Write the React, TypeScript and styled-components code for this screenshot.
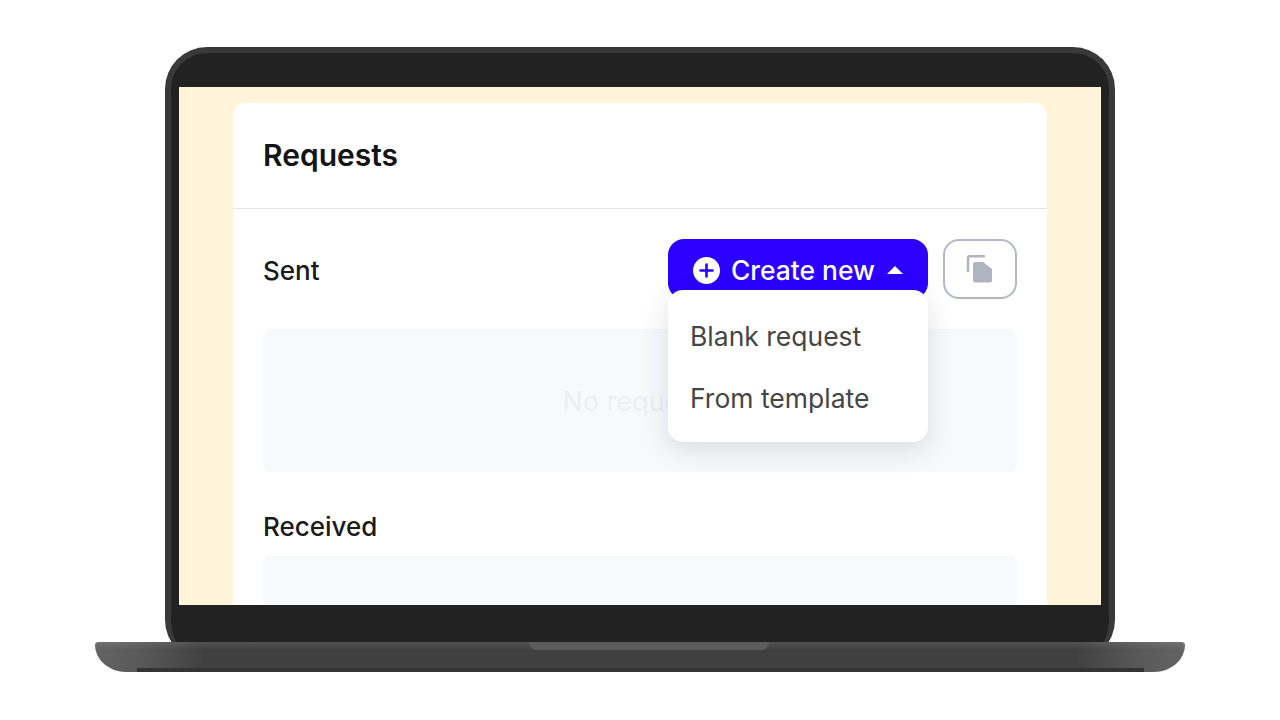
import React from "react";
import styled, { createGlobalStyle } from "styled-components";

const Global = createGlobalStyle`
  html, body { margin: 0; padding: 0; background: #fff; }
  body { font-family: Inter, "Liberation Sans", sans-serif; }
`;

const Stage = styled.div`
  width: 1280px;
  height: 720px;
  display: flex;
  flex-direction: column;
  align-items: center;
  padding-top: 47px;
  box-sizing: border-box;
  overflow: hidden;
`;

const Lid = styled.div`
  width: 950px;
  height: 615px;
  box-sizing: border-box;
  padding: 34px 8px 0;
  background: #222222;
  border: 6px solid #393939;
  border-bottom: 0;
  border-radius: 42px;
  display: flex;
`;

const Screen = styled.div`
  width: 922px;
  height: 518px;
  background: #fff3d9;
  display: flex;
  justify-content: center;
  overflow: hidden;
`;

const Card = styled.div`
  width: 814px;
  margin-top: 16px;
  background: #fff;
  border-radius: 13px 13px 0 0;
  align-self: flex-start;
  height: 560px;
`;

const CardHeader = styled.header`
  height: 106px;
  box-sizing: border-box;
  padding: 0 30px 2px;
  display: flex;
  align-items: center;
  border-bottom: 1px solid #e4e6ea;
`;

const Title = styled.h1`
  margin: 0;
  font-size: 30px;
  font-weight: 600;
  color: #141414;
`;

const Body = styled.div`
  padding: 30px 30px 0;
`;

const SectionRow = styled.div`
  display: flex;
  align-items: center;
  justify-content: space-between;
  height: 60px;
  margin-bottom: 30px;
`;

const SectionLabel = styled.span`
  font-size: 26px;
  font-weight: 500;
  color: #1a1a1a;
  padding-top: 2px;
`;

const Actions = styled.div`
  position: relative;
  display: flex;
  gap: 15px;
`;

const CreateButton = styled.button`
  width: 260px;
  height: 60px;
  border: 0;
  border-radius: 16px;
  background: #2b00ff;
  color: #fff;
  font: 500 26.4px Inter, sans-serif;
  display: flex;
  align-items: flex-start;
  padding: 16px 0 0 25px;
  box-sizing: border-box;
  line-height: 31px;
`;

const PlusIcon = styled.svg`
  width: 27px;
  height: 27px;
  margin: 2px 11px 0 0;
`;

const Caret = styled.svg`
  width: 16px;
  height: 8px;
  margin: 11px 0 0 12px;
`;

const CopyButton = styled.button`
  width: 74px;
  height: 60px;
  box-sizing: border-box;
  background: #fff;
  border: 2px solid #b4b8c6;
  border-radius: 16px;
  display: flex;
  align-items: center;
  justify-content: center;
  padding: 0;
`;

const Menu = styled.div`
  position: absolute;
  left: 0;
  top: 51px;
  width: 260px;
  height: 152px;
  box-sizing: border-box;
  background: #fff;
  border-radius: 15px;
  box-shadow: 0 8px 28px rgba(40, 44, 70, 0.14);
  padding: 15px 22px;
`;

const MenuItem = styled.div`
  height: 62px;
  display: flex;
  align-items: center;
  font-size: 26.5px;
  font-weight: 400;
  color: #454545;
`;

const EmptyPanel = styled.div<{ $height: number }>`
  height: ${(p) => p.$height}px;
  box-sizing: border-box;
  padding-top: 2px;
  background: #f8f9fb;
  border-radius: 8px;
  display: flex;
  align-items: center;
  justify-content: center;
  font-size: 27px;
  color: #eeeff2;
`;

const ReceivedLabel = styled(SectionLabel)`
  display: block;
  margin: 39px 0 13px;
  padding-top: 0;
  line-height: 32px;
`;

const Base = styled.div`
  width: 1090px;
  height: 30px;
  margin-top: -20px;
  position: relative;
  display: flex;
  justify-content: center;
  border-radius: 4px 4px 32px 32px / 3px 3px 28px 28px;
  background:
    linear-gradient(#343434, #343434) 50% 100% / 1007px 4px no-repeat,
    linear-gradient(to bottom, rgba(255,255,255,0.09) 0, rgba(255,255,255,0) 8px),
    linear-gradient(to right, #646464 0, #565656 5%, #404040 10%, #404040 90%, #565656 95%, #646464 100%);
`;

const Notch = styled.div`
  width: 240px;
  height: 8px;
  margin-left: 18px;
  background: #5b5b5b;
  border-radius: 0 0 8px 8px;
`;

export default function App() {
  return (
    <>
      <Global />
      <Stage>
        <Lid>
          <Screen>
            <Card>
              <CardHeader>
                <Title>Requests</Title>
              </CardHeader>
              <Body>
                <SectionRow>
                  <SectionLabel>Sent</SectionLabel>
                  <Actions>
                    <CreateButton>
                      <PlusIcon viewBox="0 0 27 27">
                        <circle cx="13.5" cy="13.5" r="13.500" fill="#fff" />
                        <path d="M13.5 7.5v12M7.5 13.5h12" stroke="#2b00ff" strokeWidth="2.6" strokeLinecap="round" />
                      </PlusIcon>
                      Create new
                      <Caret viewBox="0 0 16 8">
                        <path d="M8 0l8 8H0z" fill="#fff" />
                      </Caret>
                    </CreateButton>
                    <CopyButton>
                      <svg width="30" height="30" viewBox="0 0 30 30">
                        <path d="M3 18V3.500A1.500 1.500 0 0 1 4.500 2.200H20" fill="none" stroke="#b0b4c0" strokeWidth="2.5" />
                        <path d="M10 8h8L27 15V26.500a2 2 0 0 1-2 2H10a2 2 0 0 1-2-2V10a2 2 0 0 1 2-2z" fill="#b0b4c0" />
                      </svg>
                    </CopyButton>
                    <Menu>
                      <MenuItem>Blank request</MenuItem>
                      <MenuItem>From template</MenuItem>
                    </Menu>
                  </Actions>
                </SectionRow>
                <EmptyPanel $height={143}>No requests</EmptyPanel>
                <ReceivedLabel>Received</ReceivedLabel>
                <EmptyPanel $height={143} />
              </Body>
            </Card>
          </Screen>
        </Lid>
        <Base>
          <Notch />
        </Base>
      </Stage>
    </>
  );
}
